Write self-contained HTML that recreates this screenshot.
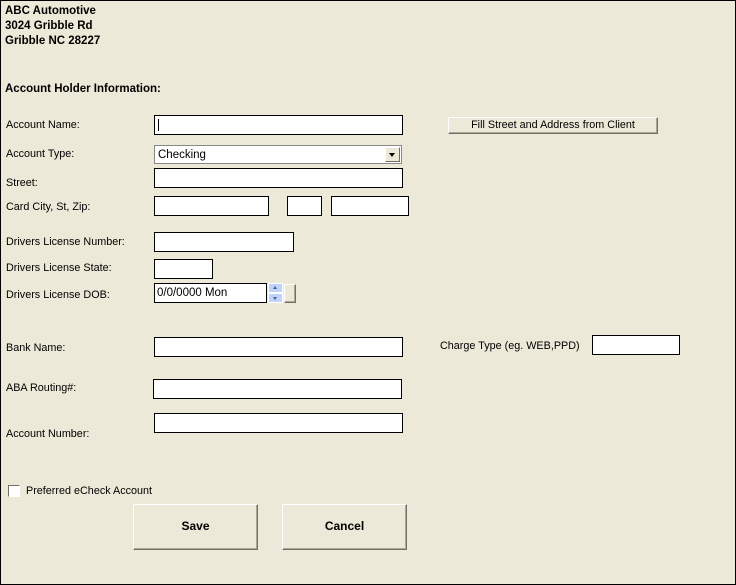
<html><head><style>
body{margin:0;width:736px;height:585px;background:#ECE9D8;font-family:"Liberation Sans",sans-serif;font-size:10.8px;color:#000;position:relative;overflow:hidden}
.frame{position:absolute;left:0;top:0;width:734px;height:583px;border:1px solid #000}
.a{position:absolute;white-space:nowrap}
.b{font-weight:bold;font-size:11.5px}
.in{position:absolute;background:#fff;border:1px solid #000;box-sizing:border-box}
.btn{position:absolute;box-sizing:border-box;background:#ECE9D8;border:1px solid;border-color:#fff #716F64 #716F64 #fff;box-shadow:inset -1px -1px 0 #ACA899;text-align:center}
</style></head><body>
<div class="frame"></div>
<div class="a b" style="left:5px;top:4px;line-height:15px">ABC Automotive<br>3024 Gribble Rd<br>Gribble NC 28227</div>
<div class="a b" style="left:5px;top:83px">Account Holder Information:</div>
<div class="a" style="left:6px;top:119px">Account Name:</div>
<div class="a" style="left:6px;top:148px">Account Type:</div>
<div class="a" style="left:6px;top:177px">Street:</div>
<div class="a" style="left:6px;top:201px">Card City, St, Zip:</div>
<div class="a" style="left:6px;top:236px">Drivers License Number:</div>
<div class="a" style="left:6px;top:262px">Drivers License State:</div>
<div class="a" style="left:6px;top:289px">Drivers License DOB:</div>
<div class="a" style="left:6px;top:342px">Bank Name:</div>
<div class="a" style="left:6px;top:382px">ABA Routing#:</div>
<div class="a" style="left:6px;top:428px">Account Number:</div>
<div class="a" style="left:440px;top:340px">Charge Type (eg. WEB,PPD)</div>
<div class="in" style="left:154px;top:115px;width:249px;height:20px"><div style="position:absolute;left:3px;top:3px;width:1px;height:12px;background:#000"></div></div>
<div class="in" style="left:154px;top:145px;width:248px;height:19px;border:1px solid #888"><span class="a" style="left:3px;top:3px;font-size:11.5px">Checking</span>
<div style="position:absolute;right:1px;top:1px;width:15px;height:15px;background:#ECE9D8;border:1px solid;box-sizing:border-box;border-color:#fff #716F64 #716F64 #fff"><div style="position:absolute;left:3px;top:5px;border-left:3.5px solid transparent;border-right:3.5px solid transparent;border-top:4px solid #000"></div></div></div>
<div class="in" style="left:154px;top:168px;width:249px;height:20px"></div>
<div class="in" style="left:154px;top:196px;width:115px;height:20px"></div>
<div class="in" style="left:287px;top:196px;width:35px;height:20px"></div>
<div class="in" style="left:331px;top:196px;width:78px;height:20px"></div>
<div class="in" style="left:154px;top:232px;width:140px;height:20px"></div>
<div class="in" style="left:154px;top:259px;width:59px;height:20px"></div>
<div class="in" style="left:154px;top:283px;width:113px;height:20px"><span class="a" style="left:2px;top:3px;font-size:11.5px">0/0/0000 Mon</span></div>
<div style="position:absolute;left:268px;top:283px;width:15px;height:10px;background:#C1D3FB;border:1px solid #fff;box-sizing:border-box"><div style="position:absolute;left:4px;top:2px;border-left:2.5px solid transparent;border-right:2.5px solid transparent;border-bottom:3px solid #4D6185"></div></div>
<div style="position:absolute;left:268px;top:293px;width:15px;height:10px;background:#C1D3FB;border:1px solid #fff;box-sizing:border-box"><div style="position:absolute;left:4px;top:3px;border-left:2.5px solid transparent;border-right:2.5px solid transparent;border-top:3px solid #4D6185"></div></div>
<div class="btn" style="left:284px;top:284px;width:12px;height:19px"></div>
<div class="in" style="left:154px;top:337px;width:249px;height:20px"></div>
<div class="in" style="left:592px;top:335px;width:88px;height:20px"></div>
<div class="in" style="left:153px;top:379px;width:249px;height:20px"></div>
<div class="in" style="left:154px;top:413px;width:249px;height:20px"></div>
<div class="btn" style="left:448px;top:117px;width:210px;height:17px;line-height:14px">Fill Street and Address from Client</div>
<div style="position:absolute;left:8px;top:485px;width:12px;height:12px;background:#fff;border:1px solid;box-sizing:border-box;border-color:#716F64 #fff #fff #716F64"></div>
<div class="a" style="left:26px;top:485px">Preferred eCheck Account</div>
<div class="btn" style="left:133px;top:504px;width:125px;height:46px;line-height:43px;font-weight:bold;font-size:12px">Save</div>
<div class="btn" style="left:282px;top:504px;width:125px;height:46px;line-height:43px;font-weight:bold;font-size:12px">Cancel</div>
</body></html>
